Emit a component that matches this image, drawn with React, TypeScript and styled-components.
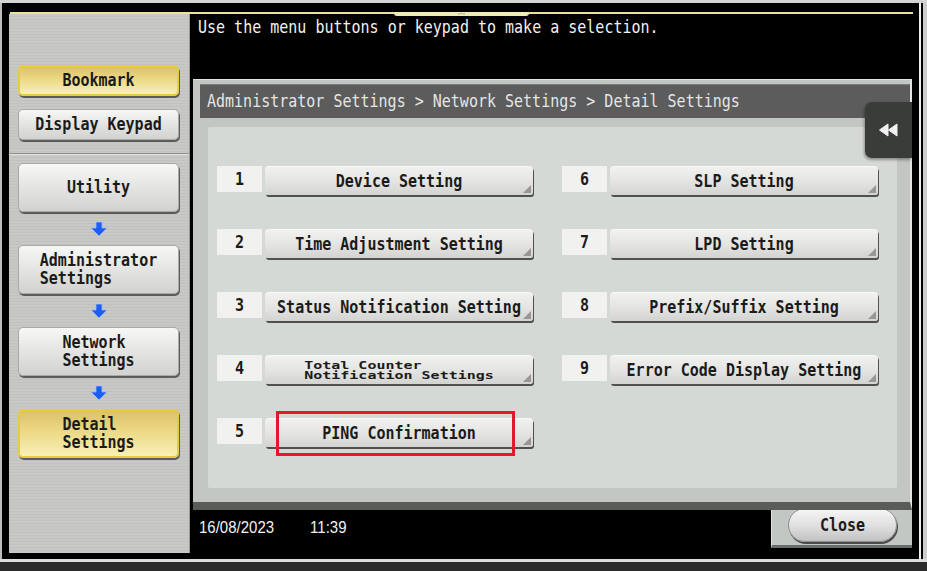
import React from 'react';
import styled, { createGlobalStyle, css } from 'styled-components';

const GlobalStyle = createGlobalStyle`
  html, body {
    margin: 0;
    padding: 0;
    background: #2b2b2b;
  }
  body {
    width: 927px;
    height: 571px;
    overflow: hidden;
  }
`;

const panelFont = css`
  font-family: "DejaVu Sans Mono", "Liberation Mono", monospace;
  font-size: 15px;
`;

const Page = styled.div`
  width: 927px;
  height: 571px;
  display: flex;
  flex-direction: column;
  background: #2b2b2b;
`;

const TopEdge = styled.div`
  height: 3px;
  flex: none;
  background: #d4d4d4;
`;

const Middle = styled.div`
  height: 556px;
  flex: none;
  display: flex;
`;

const LeftEdge = styled.div`
  width: 2px;
  background: #bcbcbc;
`;

const RightEdge = styled.div`
  width: 8px;
  box-sizing: border-box;
  border-left: 2px solid #ececec;
  background: linear-gradient(to right, #000 0 2px, #cdcdcd 2px);
`;

const BottomEdge = styled.div`
  height: 3px;
  flex: none;
  background: #dcdcdc;
`;

const Bezel = styled.div`
  flex: 1;
  background: #000;
  padding: 9px 0 6px 7px;
  display: flex;
`;

const Screen = styled.div`
  flex: 1;
  display: flex;
  flex-direction: column;
  position: relative;
`;

const TopLine = styled.div`
  height: 2px;
  margin: 0 6px 0 1px;
  background: #e6e3a0;
`;

const TopTab = styled.div`
  position: absolute;
  left: 385px;
  top: 0;
  width: 135px;
  height: 4px;
  overflow: hidden;
  border-radius: 0 0 3px 3px;
  background: #efedb2;
  color: #777;
  font-family: "DejaVu Sans", sans-serif;
  font-size: 4px;
  line-height: 4px;
  text-align: center;
`;

const Body = styled.div`
  flex: 1;
  display: flex;
`;

const scanlines = css`
  background: repeating-linear-gradient(
    to bottom,
    #c8c9c6 0px,
    #c8c9c6 2px,
    #c1c2bf 2px,
    #c1c2bf 3px
  );
`;

const LeftPanel = styled.div`
  width: 181px;
  display: flex;
  flex-direction: column;
  border-right: 1px solid #9a9b98;
  box-sizing: border-box;
  ${scanlines};
`;

const QuickSection = styled.div`
  height: 139px;
  box-sizing: border-box;
  padding: 51px 0 0 9px;
  display: flex;
  flex-direction: column;
  gap: 13px;
`;

const Separator = styled.div`
  height: 2px;
  border-top: 1px solid #8d8e8b;
  border-bottom: 1px solid #e4e4e2;
  box-sizing: border-box;
`;

const NavSection = styled.div`
  padding: 8px 0 0 9px;
  display: flex;
  flex-direction: column;
`;

const Label = styled.span<{ $small?: boolean; $left?: boolean }>`
  display: inline-block;
  white-space: pre;
  text-align: ${p => (p.$left ? 'left' : 'center')};
  line-height: ${p => (p.$small ? '14px' : '15px')};
  transform: ${p => (p.$small ? 'scaleY(0.72)' : 'scaleY(1.18)')};
`;

const SideButton = styled.div<{ $active?: boolean; $tall?: boolean }>`
  ${panelFont};
  font-weight: bold;
  width: 161px;
  height: ${p => (p.$tall ? '49px' : '31px')};
  box-sizing: border-box;
  display: flex;
  align-items: center;
  justify-content: center;
  color: #1b1b1b;
  border-radius: 5px;
  border: ${p => (p.$active ? '2px solid #e6cd3e' : '1px solid #a9aaa7')};
  background: ${p =>
    p.$active
      ? 'linear-gradient(#dcc168, #ecd985 45%, #f8f0b6)'
      : 'linear-gradient(#f7f7f5, #e2e2e0 55%, #d2d2d0)'};
  box-shadow: 1px 2px 0 #5c5c5a;
`;

const ArrowSlot = styled.div`
  height: 33px;
  width: 161px;
  display: flex;
  align-items: center;
  justify-content: center;
`;

const DownArrow = () => (
  <svg width="16" height="14" viewBox="0 0 16 14">
    <path d="M5 0 H11 V6 H16 L8 14 L0 6 H5 Z" fill="#1d5ef2" stroke="#9fb8ee" strokeWidth="0.8" />
  </svg>
);

const MainColumn = styled.div`
  flex: 1;
  display: flex;
  flex-direction: column;
`;

const Message = styled.div`
  ${panelFont};
  height: 65px;
  box-sizing: border-box;
  padding: 4px 0 0 8px;
  color: #f2f2f2;
`;

const Frame = styled.div`
  position: relative;
  width: 719px;
  height: 431px;
  margin-left: 3px;
  box-sizing: border-box;
  background: #c3c7c3;
  border-top: 1px solid #e2e4e2;
  border-right: 2px solid #e2e4e2;
  border-bottom: 8px solid #5a5c5a;
  padding: 4px 0 0 7px;
  display: flex;
  flex-direction: column;
`;

const Header = styled.div`
  ${panelFont};
  height: 34px;
  flex: none;
  display: flex;
  align-items: center;
  padding-left: 7px;
  background: #5b5c5b;
  border-top: 1px solid #7c7d7c;
  box-sizing: border-box;
  color: #e6e6e6;
`;

const Content = styled.div`
  flex: 1;
  margin: 9px 13px 14px 8px;
  padding: 39px 0 0 9px;
  background: #d5d9d5;
  border-radius: 2px;
  display: grid;
  grid-template-columns: 318px 318px;
  grid-template-rows: repeat(5, 31px);
  grid-auto-flow: column;
  column-gap: 27px;
  row-gap: 32px;
  align-content: start;
`;

const BackTab = styled.div`
  position: absolute;
  left: 672px;
  top: 22px;
  width: 47px;
  height: 56px;
  border-radius: 7px 0 0 7px;
  background: #3a3c3a;
  box-shadow: -1px 2px 3px rgba(0, 0, 0, 0.35);
  display: flex;
  align-items: center;
  justify-content: center;
`;

const RewindIcon = () => (
  <svg width="19" height="14" viewBox="0 0 19 14">
    <path d="M0.5 7 L9 1 V13 Z M9.5 7 L18 1 V13 Z" fill="#f2f2f2" stroke="#f2f2f2" strokeLinejoin="round" />
  </svg>
);

const Row = styled.div`
  display: flex;
  align-items: flex-start;
  gap: 3px;
`;

const NumBox = styled.div`
  ${panelFont};
  font-weight: bold;
  width: 45px;
  height: 26px;
  display: flex;
  align-items: center;
  justify-content: center;
  background: #f1f2f0;
  color: #1b1b1b;
`;

const MenuButton = styled.div`
  ${panelFont};
  font-weight: bold;
  position: relative;
  width: 268px;
  height: 29px;
  box-sizing: border-box;
  display: flex;
  align-items: center;
  justify-content: center;
  color: #1b1b1b;
  border-radius: 4px 4px 3px 3px;
  border-top: 1px solid #f8f8f8;
  background: linear-gradient(#f1f1ef, #e3e3e1 55%, #d3d3d1);
  box-shadow: 1px 2px 0 #4f504f;

  &::after {
    content: '';
    position: absolute;
    right: 2px;
    bottom: 2px;
    border-left: 8px solid transparent;
    border-bottom: 8px solid #979896;
  }
`;

const Highlight = styled.div`
  position: absolute;
  left: 11px;
  top: -8px;
  width: 239px;
  height: 45px;
  box-sizing: border-box;
  border: 3px solid #e2192b;
`;

const Footer = styled.div`
  flex: 1;
  display: flex;
  align-items: flex-start;
`;

const Clock = styled.div`
  font-family: "Liberation Sans", Arial, sans-serif;
  font-size: 15px;
  color: #f0f0f0;
  margin: 8px 0 0 9px;
  display: flex;
  gap: 36px;
  transform: scaleY(1.1);
`;

const CloseTab = styled.div`
  margin: -8px 7px 0 auto;
  width: 141px;
  height: 46px;
  box-sizing: border-box;
  padding: 6px 0 0 16px;
  background: #c3c7c3;
  border-left: 1px solid #e0e2e0;
  border-bottom: 3px solid #6a6c6a;
`;

const CloseButton = styled.div`
  ${panelFont};
  font-weight: bold;
  width: 109px;
  height: 34px;
  box-sizing: border-box;
  display: flex;
  align-items: center;
  justify-content: center;
  border-radius: 18px;
  border: 1px solid #8c8d8c;
  background: linear-gradient(#f6f6f6, #dedede 55%, #c2c2c2);
  box-shadow: 1px 2px 0 #4a4a4a;
  color: #1b1b1b;
`;

type MenuItem = { n: number; label: string; small?: boolean; highlight?: boolean };

const MENU: MenuItem[] = [
  { n: 1, label: 'Device Setting' },
  { n: 2, label: 'Time Adjustment Setting' },
  { n: 3, label: 'Status Notification Setting' },
  { n: 4, label: 'Total Counter\nNotification Settings', small: true },
  { n: 5, label: 'PING Confirmation', highlight: true },
  { n: 6, label: 'SLP Setting' },
  { n: 7, label: 'LPD Setting' },
  { n: 8, label: 'Prefix/Suffix Setting' },
  { n: 9, label: 'Error Code Display Setting' },
];

const NAV = [
  { label: 'Utility' },
  { label: 'Administrator\nSettings' },
  { label: 'Network\nSettings' },
  { label: 'Detail\nSettings', active: true },
];

export default function App() {
  return (
    <Page>
      <GlobalStyle />
      <TopEdge />
      <Middle>
        <LeftEdge />
        <Bezel>
          <Screen>
            <TopLine />
            <TopTab>«•»</TopTab>
            <Body>
              <LeftPanel>
                <QuickSection>
                  <SideButton $active>
                    <Label>Bookmark</Label>
                  </SideButton>
                  <SideButton>
                    <Label>Display Keypad</Label>
                  </SideButton>
                </QuickSection>
                <Separator />
                <NavSection>
                  {NAV.map((item, idx) => (
                    <React.Fragment key={item.label}>
                      {idx > 0 && (
                        <ArrowSlot>
                          <DownArrow />
                        </ArrowSlot>
                      )}
                      <SideButton $tall $active={item.active}>
                        <Label $left>{item.label}</Label>
                      </SideButton>
                    </React.Fragment>
                  ))}
                </NavSection>
              </LeftPanel>

              <MainColumn>
                <Message>
                  <Label>Use the menu buttons or keypad to make a selection.</Label>
                </Message>
                <Frame>
                  <Header>
                    <Label>Administrator Settings &gt; Network Settings &gt; Detail Settings</Label>
                  </Header>
                  <Content>
                    {MENU.map(item => (
                      <Row key={item.n}>
                        <NumBox>
                          <Label>{item.n}</Label>
                        </NumBox>
                        <MenuButton>
                          <Label $small={item.small} $left={item.small}>
                            {item.label}
                          </Label>
                          {item.highlight && <Highlight />}
                        </MenuButton>
                      </Row>
                    ))}
                  </Content>
                  <BackTab>
                    <RewindIcon />
                  </BackTab>
                </Frame>
                <Footer>
                  <Clock>
                    <span>16/08/2023</span>
                    <span>11:39</span>
                  </Clock>
                  <CloseTab>
                    <CloseButton>
                      <Label>Close</Label>
                    </CloseButton>
                  </CloseTab>
                </Footer>
              </MainColumn>
            </Body>
          </Screen>
        </Bezel>
        <RightEdge />
      </Middle>
      <BottomEdge />
    </Page>
  );
}
